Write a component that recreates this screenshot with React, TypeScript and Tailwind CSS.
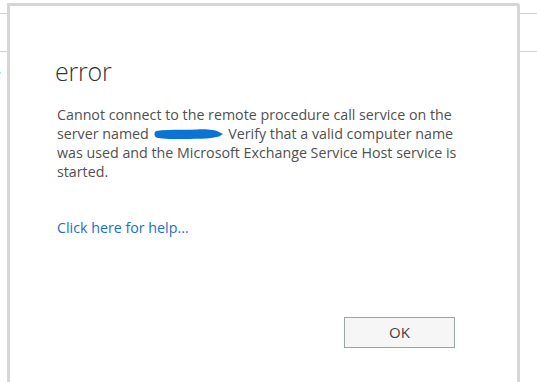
import React from "react";

const font = { fontFamily: '"Segoe UI", "Open Sans", "Noto Sans", sans-serif' };

function Redaction() {
  return (
    <svg width="72" height="14" viewBox="0 0 72 14" className="inline-block align-middle -mt-[3px]">
      <path
        d="M3 4 C14 2 30 3 44 2.5 C55 2 62 3 66 5 L70 7 L66 9.5 C58 12 40 12 24 12 C12 12 5 11.5 2.5 10 C1 8 1 5.5 3 4 Z"
        fill="#0a74d6"
      />
    </svg>
  );
}

export default function App() {
  return (
    <div className="relative w-[537px] h-[382px] overflow-hidden bg-white" style={font}>
      {/* page behind the dialog */}
      <div className="flex flex-col">
        <div className="h-[14px] border-b border-[#c9d3dc]" />
        <div className="h-[38px] border-b border-[#c9d3dc]" />
        <div className="pt-[14px] text-[14px] leading-none text-[#1a73c8] -ml-[7px]">e</div>
      </div>

      {/* dialog */}
      <div className="absolute left-[7px] top-[3px] w-[513px] h-[420px] bg-white border-[3px] border-[#d6d6d6] rounded-tr-[3px]">
        <div className="pl-[45px] pt-[50px] pr-[40px]">
          <div className="text-[25px] font-light leading-[30px] text-[#333] tracking-[-0.2px]">error</div>
          <p className="mt-[19px] ml-[2px] text-[14.25px] leading-[19px] text-[#505050]">
            Cannot connect to the remote procedure call service on the
            <br />
            server named <Redaction /> Verify that a valid computer name
            <br />
            was used and the Microsoft Exchange Service Host service is
            <br />
            started.
          </p>
          <div className="mt-[37px] ml-[2px] text-[14.25px] leading-[19px] text-[#1a6fc4]">Click here for help...</div>
          <div className="flex justify-end mt-[80px] pr-[22px]">
            <button className="w-[111px] h-[31px] bg-[#f6f6f6] border border-[#9aa5a6] text-[15px] text-[#444]">
              OK
            </button>
          </div>
        </div>
      </div>
    </div>
  );
}
